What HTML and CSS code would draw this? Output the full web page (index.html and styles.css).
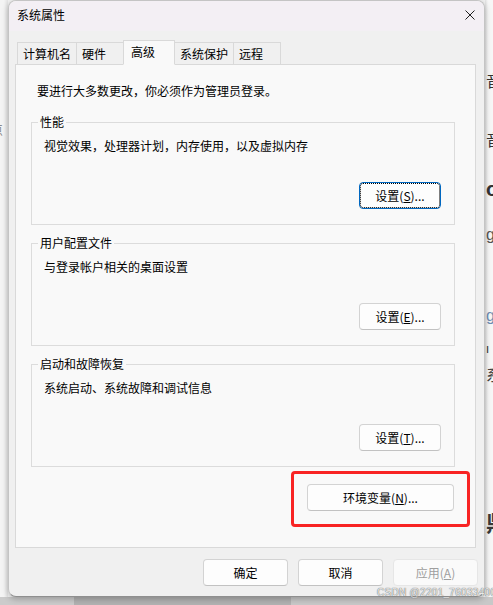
FILE: index.html
```html
<!DOCTYPE html>
<html lang="zh-CN">
<head>
<meta charset="utf-8">
<title>系统属性</title>
<link rel="stylesheet" href="styles.css">
</head>
<body>
<div class="desk-left"><p>点</p></div>
<div class="desk-right">
  <p class="f1">音</p>
  <p class="f2">“</p>
  <p class="f3">音</p>
  <p class="f4">o</p>
  <p class="f5">g</p>
  <p class="f6">g</p>
  <p class="f7">ı</p>
  <p class="f8">系</p>
  <p class="f9">鼎</p>
</div>
<div class="desk-bottom">
  <div class="shade-a"></div>
  <div class="shade-b"></div>
  <div class="shade-c"></div>
</div>

<div class="dialog">
  <div class="titlebar">
    <span>系统属性</span>
    <svg class="close" width="10" height="10" viewBox="0 0 10 10">
      <path d="M0.5 0.5 L9.5 9.5 M9.5 0.5 L0.5 9.5" stroke="#1f1f1f" stroke-width="1" fill="none"/>
    </svg>
  </div>

  <div class="tabs">
    <div class="tab">计算机名</div>
    <div class="tab">硬件</div>
    <div class="tab active">高级</div>
    <div class="tab">系统保护</div>
    <div class="tab">远程</div>
  </div>

  <div class="panel">
    <p class="notice">要进行大多数更改，你必须作为管理员登录。</p>

    <div class="group first">
      <span class="group-title">性能</span>
      <p>视觉效果，处理器计划，内存使用，以及虚拟内存</p>
      <button class="btn focus">设置(<u>S</u>)...</button>
    </div>

    <div class="group">
      <span class="group-title">用户配置文件</span>
      <p>与登录帐户相关的桌面设置</p>
      <button class="btn">设置(<u>E</u>)...</button>
    </div>

    <div class="group">
      <span class="group-title">启动和故障恢复</span>
      <p>系统启动、系统故障和调试信息</p>
      <button class="btn">设置(<u>T</u>)...</button>
    </div>

    <div class="env">
      <div class="marked">
        <button class="btn wide">环境变量(<u>N</u>)...</button>
      </div>
    </div>
  </div>

  <div class="footer">
    <button class="btn big">确定</button>
    <button class="btn big">取消</button>
    <button class="btn big" disabled>应用(<u>A</u>)</button>
  </div>
</div>

<div class="watermark">CSDN @2201_76033400</div>
</body>
</html>
```

FILE: styles.css
```css
body {
  margin: 0;
  width: 493px;
  height: 605px;
  overflow: hidden;
  position: relative;
  display: grid;
  grid-template-columns: 8px 477px 8px;
  grid-template-rows: 597px 8px;
  font-family: "Noto Sans CJK SC", "Noto Sans", sans-serif;
  font-size: 12px;
  color: #000;
  background: #f2f2f2;
}

/* what shows of the desktop behind the dialog */
.desk-left { grid-column: 1; grid-row: 1; overflow: hidden; background: linear-gradient(to right, #f4f4f4 4px, #e4e4e4); }
.desk-left p { margin: 121px 0 0 -10px; font-size: 13px; line-height: 16px; color: #8a8a8a; }

.desk-right { grid-column: 3; grid-row: 1; overflow: hidden; padding-left: 1px; background: linear-gradient(to right, #e2e2e2, #f7f7f7 3px); }
.desk-right p { margin: 0; white-space: nowrap; color: #333; font-size: 16px; line-height: 18px; }
.desk-right .f1 { margin-top: 71px; }
.desk-right .f2 { margin-top: 20px; font-size: 14px; line-height: 16px; }
.desk-right .f3 { margin-top: 5px; }
.desk-right .f4 { margin-top: 29px; font-size: 20px; line-height: 24px; font-weight: bold; font-family: "Liberation Sans", sans-serif; }
.desk-right .f5 { margin-top: 25px; color: #555; font-family: "Liberation Sans", sans-serif; }
.desk-right .f6 { margin-top: 63px; color: #6d8db3; font-family: "Liberation Sans", sans-serif; }
.desk-right .f7 { margin-top: 16px; font-size: 12px; line-height: 14px; }
.desk-right .f8 { margin-top: 10px; color: #444; }
.desk-right .f9 { margin-top: 126px; font-size: 22px; line-height: 24px; font-weight: bold; color: #3a3a3a; }

.desk-bottom { grid-column: 1 / -1; grid-row: 2; display: flex; }
.shade-a { width: 74px; background: #cbcbcb; }
.shade-b { width: 217px; background: #b2b2b2; }
.shade-c { flex: 1; background: #c8c8c8; }

/* the dialog */
.dialog {
  grid-column: 2;
  grid-row: 1;
  display: flex;
  flex-direction: column;
  background: #f0f0f0;
  border: 1px solid #c4c4c4;
  border-bottom-color: #8f8f8f;
  border-radius: 8px;
  overflow: hidden;
  box-shadow: 0 2px 6px rgba(0, 0, 0, .25);
}

.titlebar {
  height: 30px;
  box-sizing: border-box;
  padding: 0 9px 2px 8px;
  display: flex;
  align-items: center;
  justify-content: space-between;
  background: #f3eff4;
  line-height: 16px;
}
.close { display: block; }

.tabs {
  display: flex;
  align-items: flex-end;
  height: 25px;
  margin: 9px 0 -1px 8px;
  position: relative;
}
.tab {
  box-sizing: border-box;
  height: 23px;
  min-width: 48px;
  padding: 3px 5px 0;
  border: 1px solid #d9d9d9;
  background: #f0f0f0;
  line-height: 16px;
}
.tab + .tab { margin-left: -1px; }
.tab.active {
  height: 25px;
  min-width: 52px;
  padding-left: 7px;
  background: #f9f9f9;
  border-bottom-color: #f9f9f9;
  position: relative;
}

.panel {
  box-sizing: border-box;
  width: 461px;
  height: 484px;
  margin-left: 6px;
  padding: 18px 20px 0 15px;
  border: 1px solid #d9d9d9;
  background: #f9f9f9;
}
.notice { margin: 0 0 0 6px; line-height: 16px; }

.group {
  box-sizing: border-box;
  height: 103px;
  margin-top: 18px;
  padding: 0 13px 15px 12px;
  border: 1px solid #dcdcdc;
  display: flex;
  flex-direction: column;
}
.group.first { margin-top: 23px; }
.group-title {
  align-self: flex-start;
  margin: -9px 0 0 -6px;
  padding: 0 2px;
  background: #f9f9f9;
  line-height: 16px;
}
.group p { margin: 8px 0 0; line-height: 16px; }
.group .btn { margin-top: auto; align-self: flex-end; }

.btn {
  box-sizing: border-box;
  width: 82px;
  height: 27px;
  padding: 0;
  border: 1px solid #d3d3d3;
  border-bottom-color: #c2c2c2;
  border-radius: 4px;
  background: #fdfdfd;
  font: inherit;
  line-height: 16px;
  color: #000;
}
.btn u { text-underline-offset: 1px; }
.btn.focus {
  border-color: #0067c0;
  outline: 1px dotted #000;
  outline-offset: -2px;
}
.btn.wide { width: 147px; display: block; }
.btn.big { width: 85px; }
.btn:disabled {
  background: #fafafa;
  border-color: #e6e6e6;
  color: #9e9e9e;
}

.env { display: flex; justify-content: flex-end; margin: 17px 1px 0 0; }
.marked { position: relative; }
.marked::after {
  content: "";
  position: absolute;
  top: -13px;
  left: -16px;
  right: -16px;
  bottom: -16px;
  border: 3px solid #f82424;
  border-radius: 4px;
}

.footer {
  display: flex;
  justify-content: flex-end;
  gap: 10px;
  padding: 11px 6px 0 0;
}

.watermark {
  position: absolute;
  left: 377px;
  top: 587px;
  font: 10px/12px "Liberation Sans", sans-serif;
  letter-spacing: .3px;
  white-space: nowrap;
  color: rgba(255, 255, 255, .85);
  text-shadow: 0 0 1px #6f6f6f, 0 0 1px #6f6f6f;
}
```
